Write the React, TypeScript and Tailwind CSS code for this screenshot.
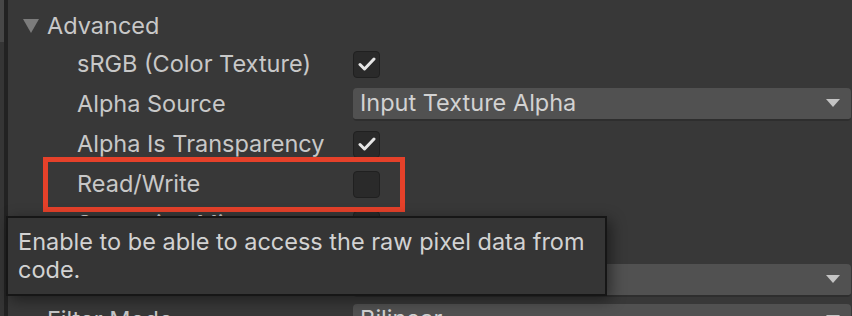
import React from 'react'

const font = { fontFamily: 'Inter, "Noto Sans", sans-serif' }

function Checkbox({ checked }: { checked?: boolean }) {
  return (
    <div className="w-[27px] h-[27px] rounded-[4px] bg-[#2a2a2a] border border-[#202020] flex items-center justify-center">
      {checked && (
        <svg width="18" height="14" viewBox="0 0 18 14">
          <polyline
            points="2,7.5 6.5,12 16,2"
            fill="none"
            stroke="#e6e6e6"
            strokeWidth="3"
            strokeLinecap="round"
            strokeLinejoin="round"
          />
        </svg>
      )}
    </div>
  )
}

function Dropdown({ value }: { value: string }) {
  return (
    <div className="h-[33px] rounded-[4px] bg-[#515151] border-b-2 border-[#2e2e2e] flex items-center justify-between pl-[7px] pr-[11px]">
      <span className="text-[#d2d2d2] whitespace-nowrap">{value}</span>
      <svg width="14" height="8" viewBox="0 0 14 8">
        <polygon points="0,0 14,0 7,8" fill="#c4c4c4" />
      </svg>
    </div>
  )
}

function Row({ label, indent = 69, children }: { label: string; indent?: number; children: React.ReactNode }) {
  return (
    <div className="h-[40px] shrink-0 flex items-center">
      <div
        className={`w-[345px] shrink-0 text-[#c8c8c8] whitespace-nowrap ${indent === 69 ? 'pl-[69px]' : 'pl-[39px]'}`}
      >
        {label}
      </div>
      <div className="flex-1 pr-[1px]">{children}</div>
    </div>
  )
}

export default function App() {
  return (
    <div
      className="w-[852px] h-[316px] overflow-hidden bg-[#383838] flex relative text-[23.5px] leading-[28px]"
      style={font}
    >
      {/* left scroller edge */}
      <div className="w-[4px] flex flex-col shrink-0">
        <div className="h-[42px] bg-[#474747]" />
        <div className="flex-1 bg-[#353535]" />
      </div>
      <div className="w-[4px] bg-[#222222] shrink-0" />

      {/* inspector */}
      <div className="flex-1 flex flex-col pt-[4px]">
        <div className="h-[40px] shrink-0 flex items-center pl-[15px] pt-[3px] gap-[8px]">
          <svg width="16" height="14" viewBox="0 0 16 14">
            <polygon points="0,0 16,0 8,14" fill="#7c7c7c" />
          </svg>
          <span className="text-[#c8c8c8]">Advanced</span>
        </div>
        <Row label="sRGB (Color Texture)">
          <Checkbox checked />
        </Row>
        <Row label="Alpha Source">
          <Dropdown value="Input Texture Alpha" />
        </Row>
        <Row label="Alpha Is Transparency">
          <Checkbox checked />
        </Row>
        <Row label="Read/Write">
          <Checkbox />
        </Row>
        <Row label="Streaming Mipmaps">
          <Checkbox />
        </Row>
        <div className="h-[16px] shrink-0" />
        <Row label="Wrap Mode" indent={39}>
          <Dropdown value="Repeat" />
        </Row>
        <Row label="Filter Mode" indent={39}>
          <Dropdown value="Bilinear" />
        </Row>
      </div>

      {/* highlight */}
      <div className="absolute left-[43px] top-[157px] w-[362px] h-[55px] border-[5px] border-[#e5412a]" />

      {/* tooltip */}
      <div className="absolute left-[6px] top-[216px] w-[601px] h-[80px] bg-[#353535] border-2 border-[#161616] shadow-[4px_4px_14px_rgba(0,0,0,0.45)] px-[10px] pt-[10px] text-[#d2d2d2] leading-[28px] whitespace-nowrap">
        Enable to be able to access the raw pixel data from
        <br />
        code.
      </div>
    </div>
  )
}
